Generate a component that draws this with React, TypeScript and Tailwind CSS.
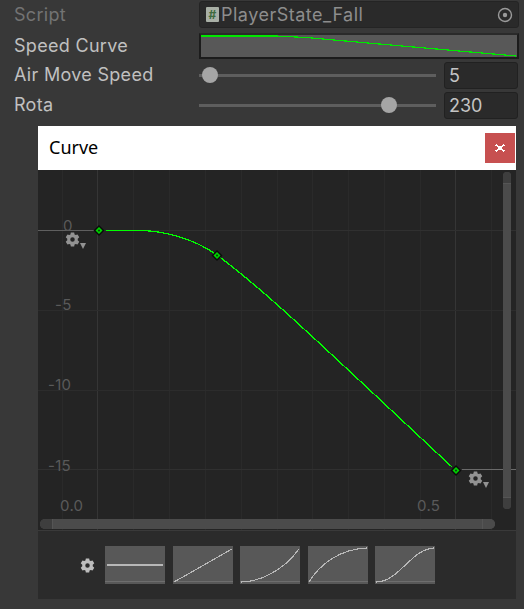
import React from 'react';

const labelFont = { fontFamily: 'Inter, sans-serif' };

const GearIcon = ({ size, color }: { size: number; color: string }) => (
  <svg width={size} height={size} viewBox="0 0 16 16">
    <path
      fillRule="evenodd"
      fill={color}
      d="M6.2 0.5h3.6l.4 2.1 1.2.7 2-.7 1.8 3.1-1.6 1.4v1.8l1.6 1.4-1.8 3.1-2-.7-1.2.7-.4 2.1H6.2l-.4-2.1-1.2-.7-2 .7L.8 10.3l1.6-1.4V7.1L.8 5.7l1.8-3.1 2 .7 1.2-.7zM8 5.6a2.4 2.4 0 1 0 0 4.8 2.4 2.4 0 0 0 0-4.8z"
    />
  </svg>
);

const GearMenu = ({ className }: { className: string }) => (
  <div className={`absolute flex items-end blur-[0.5px] ${className}`}>
    <GearIcon size={15} color="#929292" />
    <svg width={6} height={7} viewBox="0 0 6 7" className="-mb-0.5">
      <path d="M0 1h6L3 7z" fill="#929292" />
    </svg>
  </div>
);

const Slider = ({ left, value }: { left: number; value: string }) => (
  <div className="flex items-center h-[30px]">
    <div className="relative w-[237px] h-[3px] bg-[#5e5e5e]">
      <div className="absolute top-[-7px] w-[16px] h-[16px] rounded-full bg-[#a5a5a5]" style={{ left }} />
    </div>
    <div className="ml-2 w-[74px] h-[27px] rounded-[3px] bg-[#2a2a2a] border border-[#212121] pl-1 text-[18px] leading-[25px] text-[#c4c4c4]">
      {value}
    </div>
  </div>
);

const presets = [
  'M2 19H58',
  'M1 36L59 3',
  'M1 36C20 36 44 24 59 3',
  'M1 36C12 18 32 3 59 2',
  'M1 36C24 36 36 3 59 2',
];

const CurvePreset = ({ d }: { d: string }) => (
  <svg width={60} height={38} className="bg-[#585858]" shapeRendering="crispEdges">
    <path d="M0 35.5H60" stroke="#6e6e6e" strokeWidth={1} />
    <path d={d} fill="none" stroke="#b8b8b8" strokeWidth={1.1} />
  </svg>
);

const minorX = [24, 95, 131, 167, 203, 239, 274, 310, 346, 382, 453];
const rowLabel = 'text-[18px] text-[#c0c0c0] tracking-[0.3px]';
const axisLabel = 'absolute text-[15px] text-[#5a5a5a] tracking-[0.3px]';

export default function App() {
  return (
    <div className="w-[524px] h-[609px] overflow-hidden bg-[#383838]" style={labelFont}>
      {/* Inspector rows */}
      <div className="grid grid-cols-[199px_1fr] pr-[5px] pt-[1px]">
        <div className="pl-[14px] text-[18px] leading-[28px] text-[#737373] tracking-[0.3px]">Script</div>
        <div className="h-[27px] flex items-center rounded-[3px] bg-[#2a2a2a] border border-[#242424] pl-[6px]">
          <div className="w-[13px] h-[15px] bg-[#a9b0a6] text-[#3e6b3e] text-[12px] leading-[15px] text-center font-bold rounded-[1px]">#</div>
          <span className="ml-[2px] text-[18px] text-[#8d8d8d] tracking-[0.5px]">PlayerState_Fall</span>
          <svg width={16} height={16} viewBox="0 0 16 16" className="ml-auto mr-[5px]">
            <circle cx={8} cy={8} r={6.5} fill="none" stroke="#9a9a9a" strokeWidth={1.4} />
            <circle cx={8} cy={8} r={2.2} fill="#9a9a9a" />
          </svg>
        </div>

        <div className={`pl-[14px] mt-[4px] leading-[26px] ${rowLabel}`}>Speed Curve</div>
        <div className="mt-[4px] h-[26px] border-2 border-[#1c1c1c] border-t-[#2a2a2a] bg-[#585858]">
          <svg width={315} height={22} viewBox="0 0 315 22" className="block" shapeRendering="crispEdges">
            <path d="M0 1H75L105 2.5L150 6.5L315 21" fill="none" stroke="#00e800" strokeWidth={1.2} />
          </svg>
        </div>

        <div className={`pl-[14px] mt-[1px] leading-[30px] ${rowLabel}`}>Air Move Speed</div>
        <div className="mt-[1px]">
          <Slider left={3} value="5" />
        </div>

        <div className={`pl-[14px] leading-[30px] ${rowLabel}`}>Rota</div>
        <Slider left={182} value="230" />
      </div>

      {/* Curve window */}
      <div className="ml-[38px] mt-[6px] w-[478px] h-[473px] flex flex-col bg-[#2b2b2b]">
        <div className="h-[44px] shrink-0 bg-white flex items-center justify-between pl-[11px] pr-[1px]">
          <span className="text-[18px] leading-[24px] -mt-[2px] text-black" style={{ fontFamily: '"Noto Sans", sans-serif' }}>Curve</span>
          <div className="w-[30px] h-[30px] bg-[#c75050] flex items-center justify-center">
            <svg width={10} height={8} viewBox="0 0 10 8" shapeRendering="crispEdges">
              <path d="M1 0.8L9 7.2M9 0.8L1 7.2" stroke="#fff" strokeWidth={2} />
            </svg>
          </div>
        </div>

        {/* Graph area */}
        <div className="relative h-[361px] shrink-0 bg-[#242424] border-b border-[#3a3a3a] overflow-hidden">
          <svg width={478} height={361} className="absolute inset-0">
            {minorX.map((x) => (
              <path key={x} d={`M${x + 0.5} 0V361`} stroke="#2a2a2a" />
            ))}
            <path d="M59.5 0V361M417.5 0V361" stroke="#353535" />
            <path d="M0 140.5H478M0 220.5H478" stroke="#2c2c2c" />
            <path d="M0 60.5H478" stroke="#303030" />
            <path d="M0 299.5H478" stroke="#303030" />
            <path d="M0 60.5H56" stroke="#5f5f5f" />
            <path d="M424 299.5H478" stroke="#6a6a6a" />
            <path
              d="M68 60.5H100C125 60.5 155 68 179 85C230 123 280 172 414 297"
              fill="none"
              stroke="#00ff00"
              strokeWidth={1.3}
              shapeRendering="crispEdges"
            />
            {[[61, 60], [179, 85], [418, 300]].map(([x, y]) => (
              <g key={x}>
                <path d={`M${x - 5.5} ${y + 0.5}L${x} ${y - 5}L${x + 5.5} ${y + 0.5}L${x} ${y + 6}z`} fill="#0a0a0a" />
                <path d={`M${x - 3.5} ${y + 0.5}L${x} ${y - 3}L${x + 3.5} ${y + 0.5}L${x} ${y + 4}z`} fill="#00d000" />
                <circle cx={x} cy={y + 0.5} r={1} fill="#0a3a0a" />
              </g>
            ))}
          </svg>

          <span className={`${axisLabel} left-[25px] top-[45px]`}>0</span>
          <span className={`${axisLabel} left-[17px] top-[124px]`}>-5</span>
          <span className={`${axisLabel} left-[10px] top-[204px]`}>-10</span>
          <span className={`${axisLabel} left-[10px] top-[285px]`}>-15</span>
          <span className={`${axisLabel} left-[22px] top-[325px]`}>0.0</span>
          <span className={`${axisLabel} left-[379px] top-[325px]`}>0.5</span>

          <GearMenu className="left-[27px] top-[62px]" />
          <GearMenu className="left-[430px] top-[301px]" />

          {/* Scrollbars */}
          <div className="absolute left-[465px] top-[2px] w-[8px] h-[337px] rounded-full bg-[#4b4b4b] overflow-hidden flex flex-col justify-between">
            <div className="h-[12px] bg-[#3e3e3e] border-b border-[#555555]" />
            <div className="h-[12px] bg-[#3e3e3e] border-t border-[#555555]" />
          </div>
          <div className="absolute left-[2px] top-[349px] w-[455px] h-[10px] rounded-full bg-[#4b4b4b] overflow-hidden flex justify-between">
            <div className="w-[13px] bg-[#3e3e3e] border-r border-[#555555]" />
            <div className="w-[13px] bg-[#4b4b4b] border-l border-[#555555]" />
          </div>
        </div>

        {/* Preset strip */}
        <div className="flex items-center pl-[42px] pt-[15px]">
          <GearIcon size={15} color="#bdbdbd" />
          <div className="flex gap-[7.5px] ml-[10px]">
            {presets.map((d) => (
              <CurvePreset key={d} d={d} />
            ))}
          </div>
        </div>
      </div>
    </div>
  );
}
